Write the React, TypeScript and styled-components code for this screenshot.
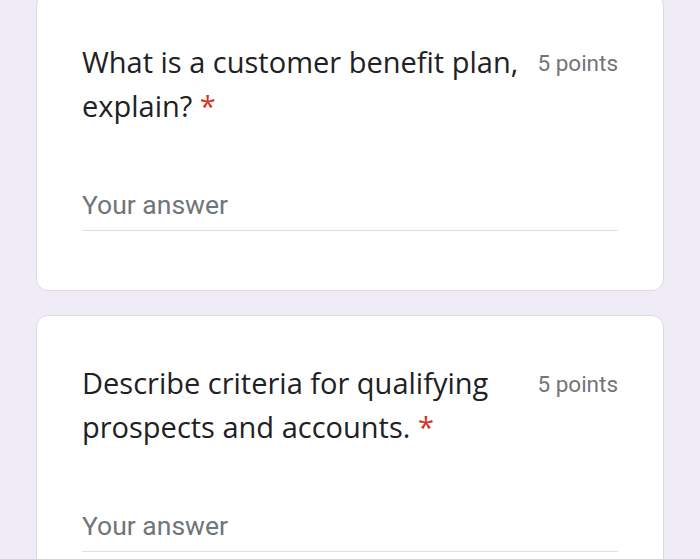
import { styled, createGlobalStyle } from "styled-components";

const GlobalStyle = createGlobalStyle`
  html, body {
    margin: 0;
    padding: 0;
    background: #efebf7;
    overflow: hidden;
  }
`;

const questions = [
  { id: 1, title: "What is a customer benefit plan, explain?", points: 5 },
  { id: 2, title: "Describe criteria for qualifying prospects and accounts.", points: 5 },
];

export default function App() {
  return (
    <>
      <GlobalStyle />
      <Page>
        {questions.map((q) => (
          <Card key={q.id}>
            <Header>
              <Title>
                {q.title} <Required>*</Required>
              </Title>
              <Points>{q.points} points</Points>
            </Header>
            <Answer>Your answer</Answer>
          </Card>
        ))}
      </Page>
    </>
  );
}

const Page = styled.main`
  display: flex;
  flex-direction: column;
  gap: 24px;
  padding: 0 36px;
  margin-top: -6px;
  font-family: Roboto, "Liberation Sans", Arial, sans-serif;
`;

const Card = styled.section`
  background: #fff;
  border: 1px solid #dadce0;
  border-radius: 12px;
  padding: 45px 45px 59px;
`;

const Header = styled.div`
  display: flex;
  align-items: flex-start;
  justify-content: space-between;
  gap: 16px;
`;

const Title = styled.h2`
  margin: 0;
  font-family: "Open Sans", Roboto, sans-serif;
  font-size: 29px;
  line-height: 44px;
  font-weight: 400;
  color: #202124;
`;

const Required = styled.span`
  color: #d93025;
`;

const Points = styled.span`
  flex-shrink: 0;
  font-size: 22.5px;
  line-height: 30px;
  margin-top: 8px;
  color: #70757a;
`;

const Answer = styled.div`
  margin-top: 61px;
  font-size: 26.5px;
  line-height: 32px;
  padding-bottom: 9px;
  color: #70757a;
  border-bottom: 1px solid #e0e0e0;
`;
